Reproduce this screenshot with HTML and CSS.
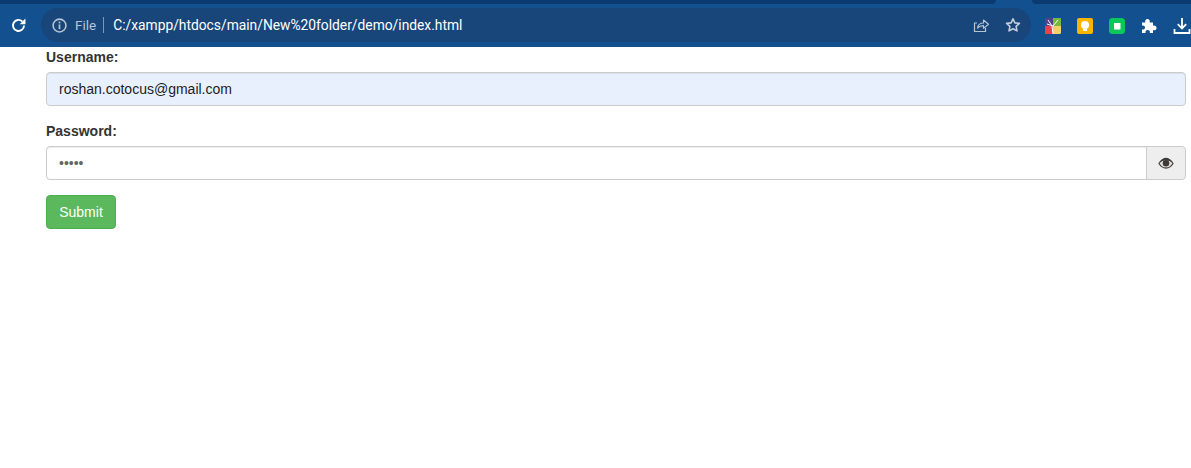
FILE: index.html
```
<!DOCTYPE html>
<html lang="en">
<head>
<meta charset="utf-8">
<title>Login</title>
<link rel="stylesheet" href="styles.css">
</head>
<body>
<header class="chrome">
  <div class="tabstrip"><div class="tab-a"></div><div class="tab-b"></div></div>
  <div class="toolbar">
    <svg class="reload" width="17" height="17" viewBox="0 0 16 16"><path d="M13.200 8a5.200 5.200 0 1 1-1.600-3.800" fill="none" stroke="#fff" stroke-width="1.800"/><path d="M14.500 1.400v5.400H9.100z" fill="#fff"/></svg>
    <div class="omnibox">
      <svg class="info" width="15" height="15" viewBox="0 0 14 14"><circle cx="7" cy="7" r="6" fill="none" stroke="#b5c3d3" stroke-width="1.500"/><rect x="6.200" y="6" width="1.600" height="4.400" fill="#b5c3d3"/><rect x="6.200" y="3.400" width="1.600" height="1.600" fill="#b5c3d3"/></svg>
      <span class="scheme">File</span>
      <span class="sep"></span>
      <span class="url">C:/xampp/htdocs/main/New%20folder/demo/index.html</span>
      <svg class="share" width="16" height="16" viewBox="0 0 16 16"><path d="M4 6H1.500v8.500h11V11" fill="none" stroke="#b5c3d3" stroke-width="1.200"/><path d="M4.500 11c.5-3.500 3-5 6-5V3l5 4.200-5 4.200V8.600c-2.500 0-4.500.6-6 2.400z" fill="none" stroke="#b5c3d3" stroke-width="1.200" stroke-linejoin="round"/></svg>
      <svg class="star" width="16" height="16" viewBox="0 0 16 16"><path d="M8 1.800l1.900 4.100 4.500.5-3.300 3 .9 4.500L8 11.700l-4 2.200.9-4.500-3.300-3 4.500-.5z" fill="none" stroke="#c3cedb" stroke-width="1.600" stroke-linejoin="round"/></svg>
    </div>
    <div class="extensions">
      <svg width="16" height="16" viewBox="0 0 16 16"><rect width="16" height="16" rx="1.500" fill="#f2cf6b"/><rect width="8" height="8" fill="#55408f"/><rect x="8" width="8" height="8" fill="#76b83f"/><rect y="8" width="8" height="8" fill="#ea3f4c"/><path d="M3 2l4 6 1 8M8 8l5-6M2 6l6 2" stroke="#fff" stroke-width="1" fill="none"/></svg>
      <svg width="16" height="16" viewBox="0 0 16 16"><rect width="16" height="16" rx="2" fill="#fdb400"/><circle cx="8" cy="7" r="4" fill="#fff"/><rect x="6" y="11" width="4" height="2" fill="#fff"/></svg>
      <svg width="16" height="16" viewBox="0 0 16 16"><rect width="16" height="16" rx="3.500" fill="#0ac75a"/><rect x="5" y="5" width="6.500" height="6.500" fill="#fff"/></svg>
      <svg width="16" height="16" viewBox="0 0 16 16"><path d="M1 4.500h3.300C3.800 2.500 4.800 1 6.500 1s2.700 1.500 2.200 3.500H12v3.200c2-.5 3.500.5 3.500 2.200S14 12.600 12 12.100V15H8.800c.5-2-.6-3-2.100-3s-2.600 1-2.100 3H1v-3.500c1.800.4 3-.6 3-2s-1.200-2.400-3-2z" fill="#fff"/></svg>
      <svg width="18" height="18" viewBox="0 0 18 18"><path d="M9 1v10M4.800 7.200L9 11.400l4.200-4.200M1.500 12v4h15v-4" fill="none" stroke="#fff" stroke-width="1.800"/></svg>
    </div>
  </div>
</header>
<main class="page">
  <form class="login">
    <div class="field">
      <label class="label" for="user">Username:</label>
      <input class="control autofilled" id="user" type="text" value="roshan.cotocus@gmail.com">
    </div>
    <div class="field">
      <label class="label" for="pass">Password:</label>
      <div class="group">
        <input class="control joined" id="pass" type="password" value="12345">
        <span class="addon">
          <svg width="16" height="14" viewBox="0 0 16 14"><path d="M1 7.500C2.700 4.500 5 3 8 3s5.300 1.500 7 4.500C13.300 10.500 11 12 8 12s-5.300-1.500-7-4.500z" fill="#e8e4dc" stroke="#4a4a4a" stroke-width="1.300"/><circle cx="8" cy="7.200" r="3.300" fill="#3c3c3c"/><path d="M2.500 5.800C4 2.800 6 1.800 8 1.800s4 1 5.500 4c-3.500-1.800-7.500-1.800-11 0z" fill="#3c3c3c"/></svg>
        </span>
      </div>
    </div>
    <button class="submit" type="button">Submit</button>
  </form>
</main>
</body>
</html>
```
FILE: styles.css
```
* { box-sizing: border-box; }
html, body { margin: 0; padding: 0; }
body {
  font-family: "Liberation Sans", Arial, sans-serif;
  font-size: 14px;
  color: #333;
  background: #fff;
  height: 468px;
  overflow: hidden;
}
.chrome { height: 47px; background: #13508f; }
.tabstrip {
  height: 4px;
  display: flex;
  justify-content: space-between;
}
.tab-a { width: 996px; height: 4px; background: #0b3a70; border-radius: 0 0 8px 0; }
.tab-b { width: 159px; height: 4px; background: #0b3a70; border-radius: 0 0 0 8px; }
.toolbar {
  height: 43px;
  display: flex;
  align-items: center;
  padding: 0 0 0 10px;
}
.reload { flex: none; }
.omnibox {
  margin-left: 14px;
  width: 990px;
  height: 34px;
  margin-top: -1px;
  border-radius: 17px;
  background: #18467a;
  display: flex;
  align-items: center;
  padding: 0 10px 0 11px;
}
.info { flex: none; }
.scheme { margin-left: 8px; color: #b5c3d3; font: 13.500px "Roboto", "Liberation Sans", sans-serif; }
.sep { width: 1px; height: 16px; background: #7f97b3; margin: 0 9px 0 7px; }
.url { flex: 1; color: #fff; font: 13.800px "Roboto", "Liberation Sans", sans-serif; white-space: nowrap; }
.share { margin-right: 16px; }
.star { flex: none; }
.extensions {
  display: flex;
  align-items: center;
  gap: 16px;
  margin-left: 14px;
}
.page { padding: 0 5px 0 46px; }
.login { display: flex; flex-direction: column; align-items: stretch; }
.field { margin-bottom: 15px; }
.label {
  display: block;
  height: 20px;
  line-height: 20px;
  margin-bottom: 5px;
  font-weight: 700;
}
.control {
  display: block;
  width: 100%;
  height: 34px;
  padding: 6px 12px;
  font: 14px "Liberation Sans", Arial, sans-serif;
  color: #333;
  background: #fff;
  border: 1px solid #ccc;
  border-radius: 4px;
  box-shadow: inset 0 1px 1px rgba(0,0,0,.075);
  outline: none;
}
.autofilled { background: #e8f0fe; color: #222; }
.group { display: flex; }
.joined { flex: 1; border-radius: 4px 0 0 4px; color: #666; }
.addon {
  width: 40px;
  height: 34px;
  flex: none;
  display: flex;
  align-items: center;
  justify-content: center;
  background: #eee;
  border: 1px solid #ccc;
  border-radius: 0 4px 4px 0;
  margin-left: -1px;
}
.submit {
  align-self: flex-start;
  width: 70px;
  height: 34px;
  font: 14px "Liberation Sans", Arial, sans-serif;
  color: #fff;
  background: #5cb85c;
  border: 1px solid #4cae4c;
  border-radius: 4px;
}
```
